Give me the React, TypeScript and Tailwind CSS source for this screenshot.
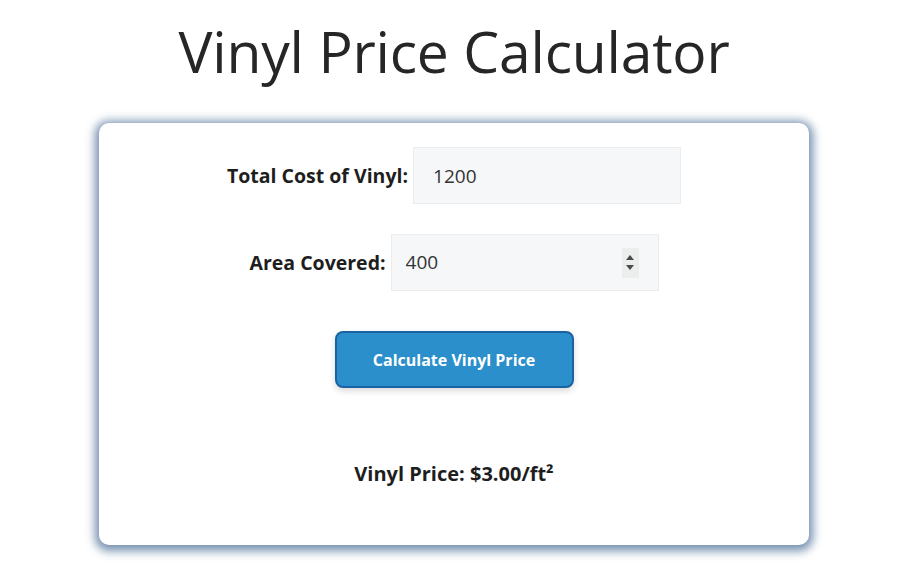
import { useState } from "react";

function Spinner() {
  return (
    <div className="flex h-[30px] w-[17px] flex-col items-center justify-center gap-[5px] bg-[#eceded]">
      <svg width="8" height="5" viewBox="0 0 8 5">
        <path d="M4 0 L8 5 L0 5 Z" fill="#4a4a4a" />
      </svg>
      <svg width="8" height="5" viewBox="0 0 8 5">
        <path d="M0 0 L8 0 L4 5 Z" fill="#4a4a4a" />
      </svg>
    </div>
  );
}

export default function App() {
  const [cost, setCost] = useState("1200");
  const [area, setArea] = useState("400");
  const [price, setPrice] = useState("3.00");

  const calculate = () => {
    const c = parseFloat(cost);
    const a = parseFloat(area);
    if (a > 0) setPrice((c / a).toFixed(2));
  };

  return (
    <div className="flex min-h-[584px] flex-col items-center bg-white pr-[3px] font-['Open_Sans','Noto_Sans',sans-serif] text-[#222]">
      <h1 className="mt-[16px] text-[57px] leading-[70px] font-normal tracking-[-0.2px] text-[#262626]">
        Vinyl Price Calculator
      </h1>

      <div className="mt-[37px] flex w-[710px] flex-col items-center rounded-[10px] bg-white pt-[24px] pb-[57px] shadow-[0_2px_10px_4px_rgba(84,118,156,0.8)]">
        <div className="flex items-center gap-[5px]">
          <label className="text-[19.5px] font-bold text-[#1e1e1e]">Total Cost of Vinyl:</label>
          <input
            value={cost}
            onChange={(e) => setCost(e.target.value)}
            className="h-[57px] w-[268px] border border-[#ebecee] bg-[#f6f7f9] px-[19px] text-[19px] text-[#333] outline-none"
          />
        </div>

        <div className="mt-[30px] flex items-center gap-[5px]">
          <label className="text-[19.5px] font-bold text-[#1e1e1e]">Area Covered:</label>
          <div className="flex h-[57px] w-[268px] items-center border border-[#ebecee] bg-[#f6f7f9] pr-[19px] pl-[14px]">
            <input
              value={area}
              onChange={(e) => setArea(e.target.value)}
              className="min-w-0 flex-1 bg-transparent text-[19px] text-[#333] outline-none"
            />
            <Spinner />
          </div>
        </div>

        <button
          onClick={calculate}
          className="mt-[40px] h-[57px] w-[239px] rounded-[8px] border-2 border-[#1b62a3] bg-[#2b8fcb] text-[16px] font-bold text-white shadow-[0_3px_6px_rgba(0,0,0,0.15)]"
        >
          Calculate Vinyl Price
        </button>

        <p className="mt-[72px] text-[20px] leading-[28px] font-bold text-[#1e1e1e]">
          Vinyl Price: ${price}/ft²
        </p>
      </div>
    </div>
  );
}
